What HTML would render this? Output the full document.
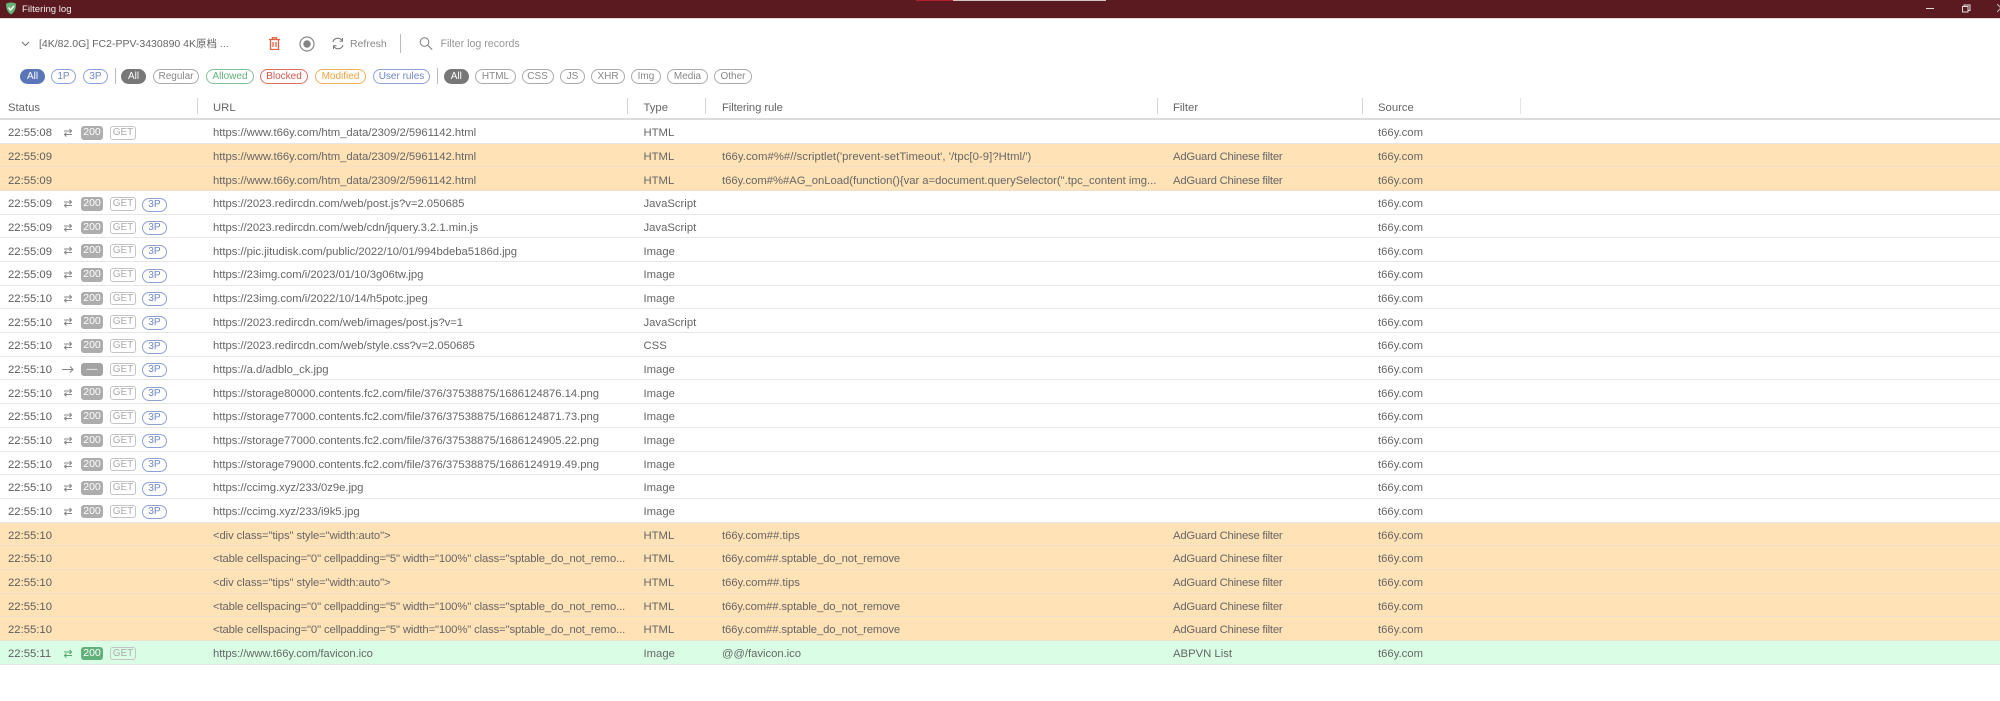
<!DOCTYPE html>
<html lang="en"><head><meta charset="utf-8"><title>Filtering log</title>
<style>
html,body{margin:0;padding:0;background:#fff}
#p{position:relative;width:2000px;height:701px;overflow:hidden;background:#fff;font:11.3px "Liberation Sans","Noto Sans CJK SC",sans-serif;color:#666;filter:blur(.35px)}
#p div,#p span,#p svg{position:absolute}
#bar{left:0;top:0;width:2000px;height:18px;background:#5b1a20;border-bottom:1px solid #e4dcdc;box-sizing:content-box}
.t{white-space:nowrap;line-height:14px}
.h{top:100.6px;color:#666}
.v{top:98px;width:1px;height:16px;background:#d4d4d4}
.pl{top:68.5px;height:15.5px;line-height:14.5px;box-sizing:border-box;border:1px solid #aaa;border-radius:8px;text-align:center;font-size:10px;color:#888;background:#fff}
.bl{border-color:#8ea1d3;color:#7087c6}
.f1{background:#5b76b8;border-color:#5b76b8;color:#fff}
.f2{background:#777;border-color:#777;color:#fff}
.r{left:0;width:2000px;height:23.68px;box-sizing:border-box;border-bottom:1px solid #e6e6e6;background:#fff}
.o{background:#ffe2b6;border-bottom-color:#eee0c8}
.g{background:#dafee5}
.r span{top:6.2px;white-space:nowrap;line-height:14px}
.ti{left:8px;color:#5c5c5c}
.u{left:213px;letter-spacing:-.03px}.y{left:643.5px}.ru{left:722px;letter-spacing:-.03px}.fi{left:1173px;letter-spacing:-.22px}.so{left:1378px}
.r span.tb{letter-spacing:-.14px}
.r span.dv{letter-spacing:-.1px}
.r span.c{left:81px;top:6px;width:22px;height:13.5px;line-height:13.5px;border-radius:3px;background:#adadad;color:#fff;text-align:center;font-size:10.5px}
.g span.c{background:#62b07a}
.r span.m{left:110px;top:6px;width:26px;height:13.5px;line-height:11.5px;border:1px solid #c4c4c4;border-radius:3px;box-sizing:border-box;color:#ababab;text-align:center;font-size:10px}
.r span.p{left:142px;top:6.5px;width:25px;height:14px;line-height:12px;border:1px solid #8ea1d3;border-radius:7px;box-sizing:border-box;color:#6f87c7;text-align:center;font-size:10.2px;background:#fff}
.r svg{left:63px;top:8px;width:10px;height:9px}
</style></head><body><div id="p">
<svg width="0" height="0" style="left:0;top:0"><defs><g id="a" fill="none" stroke-width="1.1"><path d="M1 3h7.5M6.5 1l2 2-2 2M9 6.5H1.500M3.500 4.500l-2 2 2 2"/></g></defs></svg>

<div id="bar"></div>
<div style="left:916px;top:0;width:37px;height:1px;background:#b5202c"></div>
<div style="left:953px;top:0;width:153px;height:1px;background:#cfc6c6"></div>
<svg style="left:5px;top:2px" width="12" height="13" viewBox="0 0 12 13"><path d="M6 .5C4 .5 2 1 1 1.800 1 7 2.500 10.500 6 12.500 9.500 10.500 11 7 11 1.800 10 1 8 .5 6 .5z" fill="#67b279"/><path d="M3.500 5.500l2 2.500 3.500-4" fill="none" stroke="#fff" stroke-width="1.400"/></svg>
<div class="t" style="left:22px;top:2.500px;font-size:9.6px;color:#eee">Filtering log</div>
<div style="left:1926px;top:8px;width:8px;height:1px;background:#ddd"></div>
<svg style="left:1961px;top:4px" width="10" height="9" viewBox="0 0 10 9"><path d="M1.500 2.500h5.500v5.500H1.500zM3 2.500V1h6v5.500H7" fill="none" stroke="#ddd"/></svg>
<svg style="left:1997px;top:4px" width="3" height="9" viewBox="0 0 3 9"><path d="M0 0l8 8M8 0L0 8" stroke="#bbb" fill="none"/></svg>

<svg style="left:21px;top:41px" width="9" height="6" viewBox="0 0 9 6"><path d="M1 1l3.500 3.500L8 1" fill="none" stroke="#777" stroke-width="1.100"/></svg>
<div class="t" style="left:39px;top:37px;font-size:10.5px">[4K/82.0G] FC2-PPV-3430890 4K原档 ...</div>
<svg style="left:269px;top:37px" width="11" height="13" viewBox="0 0 11 13"><path d="M0 2.500h11M3.500 2.500V.8h4v1.700M1.500 2.500v10h8v-10M4 5v5M7 5v5" fill="none" stroke="#e2603f" stroke-width="1.300"/></svg>
<svg style="left:299px;top:36px" width="16" height="16" viewBox="0 0 16 16"><circle cx="8" cy="8" r="7" fill="none" stroke="#8a8a8a" stroke-width="1.200"/><circle cx="8" cy="8" r="3.700" fill="#848484"/></svg>
<svg style="left:331px;top:37px" width="14" height="13" viewBox="0 0 14 13"><path d="M2 5A5 5 0 0 1 11 3.500M12 8A5 5 0 0 1 3 9.500" fill="none" stroke="#777" stroke-width="1.100"/><path d="M11.500 1v3.300H8.500M2.500 12V8.700h3" fill="none" stroke="#777" stroke-width="1"/></svg>
<div class="t" style="left:350px;top:37px;font-size:10.5px;color:#888">Refresh</div>
<div style="left:400px;top:34px;width:1px;height:19px;background:#bbb"></div>
<svg style="left:419px;top:37px" width="14" height="13" viewBox="0 0 14 13"><circle cx="5.500" cy="5" r="4.300" fill="none" stroke="#888" stroke-width="1.100"/><path d="M8.700 8.200l4.500 4.500" stroke="#888" stroke-width="1.100"/></svg>
<div class="t" style="left:440.500px;top:37px;font-size:10.650px;color:#999">Filter log records</div>

<div class="pl f1" style="left:20px;width:25px">All</div>
<div class="pl bl" style="left:51px;width:25px">1P</div>
<div class="pl bl" style="left:83px;width:25px">3P</div>
<div style="left:115px;top:68px;width:1px;height:16px;background:#bbb"></div>
<div class="pl f2" style="left:121px;width:25px">All</div>
<div class="pl" style="left:153px;width:46px">Regular</div>
<div class="pl" style="left:206px;width:48px;border-color:#82c497;color:#63b27c">Allowed</div>
<div class="pl" style="left:260px;width:48px;border-color:#dc6f60;color:#cf574a">Blocked</div>
<div class="pl" style="left:315px;width:51px;border-color:#f2ae58;color:#eea23f">Modified</div>
<div class="pl bl" style="left:373px;width:57px">User rules</div>
<div style="left:437px;top:68px;width:1px;height:16px;background:#bbb"></div>
<div class="pl f2" style="left:443.500px;width:25.500px">All</div>
<div class="pl" style="left:475px;width:41px">HTML</div>
<div class="pl" style="left:521.500px;width:32px">CSS</div>
<div class="pl" style="left:560px;width:25px">JS</div>
<div class="pl" style="left:591px;width:34px">XHR</div>
<div class="pl" style="left:631px;width:30px">Img</div>
<div class="pl" style="left:667px;width:41px">Media</div>
<div class="pl" style="left:714px;width:38px">Other</div>

<div class="t h" style="left:8px">Status</div><div class="v" style="left:197px"></div>
<div class="t h" style="left:213px">URL</div><div class="v" style="left:627px"></div>
<div class="t h" style="left:643.500px">Type</div><div class="v" style="left:705px"></div>
<div class="t h" style="left:722px;letter-spacing:-.1px">Filtering rule</div><div class="v" style="left:1157px"></div>
<div class="t h" style="left:1173px">Filter</div><div class="v" style="left:1362px"></div>
<div class="t h" style="left:1378px">Source</div><div class="v" style="left:1520px;background:#e4e4e4"></div>
<div style="left:0;top:118px;width:2000px;height:2px;background:#dcdcdc"></div>

<div class="r" style="top:120px"><span class="ti">22:55:08</span><svg stroke="#888"><use href="#a"/></svg><span class="c">200</span><span class="m">GET</span><span class="u">https://www.t66y.com/htm_data/2309/2/5961142.html</span><span class="y">HTML</span><span class="so">t66y.com</span></div>
<div class="r o" style="top:143.680px"><span class="ti">22:55:09</span><span class="u">https://www.t66y.com/htm_data/2309/2/5961142.html</span><span class="y">HTML</span><span class="ru" style="letter-spacing:.06px">t66y.com#%#//scriptlet('prevent-setTimeout', '/tpc[0-9]?Html/')</span><span class="fi">AdGuard Chinese filter</span><span class="so">t66y.com</span></div>
<div class="r o" style="top:167.360px"><span class="ti">22:55:09</span><span class="u">https://www.t66y.com/htm_data/2309/2/5961142.html</span><span class="y">HTML</span><span class="ru">t66y.com#%#AG_onLoad(function(){var a=document.querySelector(".tpc_content img...</span><span class="fi">AdGuard Chinese filter</span><span class="so">t66y.com</span></div>
<div class="r" style="top:191.040px"><span class="ti">22:55:09</span><svg stroke="#888"><use href="#a"/></svg><span class="c">200</span><span class="m">GET</span><span class="p">3P</span><span class="u">https://2023.redircdn.com/web/post.js?v=2.050685</span><span class="y">JavaScript</span><span class="so">t66y.com</span></div>
<div class="r" style="top:214.720px"><span class="ti">22:55:09</span><svg stroke="#888"><use href="#a"/></svg><span class="c">200</span><span class="m">GET</span><span class="p">3P</span><span class="u">https://2023.redircdn.com/web/cdn/jquery.3.2.1.min.js</span><span class="y">JavaScript</span><span class="so">t66y.com</span></div>
<div class="r" style="top:238.400px"><span class="ti">22:55:09</span><svg stroke="#888"><use href="#a"/></svg><span class="c">200</span><span class="m">GET</span><span class="p">3P</span><span class="u">https://pic.jitudisk.com/public/2022/10/01/994bdeba5186d.jpg</span><span class="y">Image</span><span class="so">t66y.com</span></div>
<div class="r" style="top:262.080px"><span class="ti">22:55:09</span><svg stroke="#888"><use href="#a"/></svg><span class="c">200</span><span class="m">GET</span><span class="p">3P</span><span class="u">https://23img.com/i/2023/01/10/3g06tw.jpg</span><span class="y">Image</span><span class="so">t66y.com</span></div>
<div class="r" style="top:285.760px"><span class="ti">22:55:10</span><svg stroke="#888"><use href="#a"/></svg><span class="c">200</span><span class="m">GET</span><span class="p">3P</span><span class="u">https://23img.com/i/2022/10/14/h5potc.jpeg</span><span class="y">Image</span><span class="so">t66y.com</span></div>
<div class="r" style="top:309.440px"><span class="ti">22:55:10</span><svg stroke="#888"><use href="#a"/></svg><span class="c">200</span><span class="m">GET</span><span class="p">3P</span><span class="u">https://2023.redircdn.com/web/images/post.js?v=1</span><span class="y">JavaScript</span><span class="so">t66y.com</span></div>
<div class="r" style="top:333.120px"><span class="ti">22:55:10</span><svg stroke="#888"><use href="#a"/></svg><span class="c">200</span><span class="m">GET</span><span class="p">3P</span><span class="u">https://2023.redircdn.com/web/style.css?v=2.050685</span><span class="y">CSS</span><span class="so">t66y.com</span></div>
<div class="r" style="top:356.800px"><span class="ti">22:55:10</span><svg viewBox="0 0 12 9" style="left:62px;width:12px" fill="none" stroke="#888" stroke-width="1.100"><path d="M0 4.500h11M8 1.500l3 3-3 3"/></svg><span class="c" style="background:#a3a3a3">—</span><span class="m">GET</span><span class="p">3P</span><span class="u">https://a.d/adblo_ck.jpg</span><span class="y">Image</span><span class="so">t66y.com</span></div>
<div class="r" style="top:380.480px"><span class="ti">22:55:10</span><svg stroke="#888"><use href="#a"/></svg><span class="c">200</span><span class="m">GET</span><span class="p">3P</span><span class="u">https://storage80000.contents.fc2.com/file/376/37538875/1686124876.14.png</span><span class="y">Image</span><span class="so">t66y.com</span></div>
<div class="r" style="top:404.160px"><span class="ti">22:55:10</span><svg stroke="#888"><use href="#a"/></svg><span class="c">200</span><span class="m">GET</span><span class="p">3P</span><span class="u">https://storage77000.contents.fc2.com/file/376/37538875/1686124871.73.png</span><span class="y">Image</span><span class="so">t66y.com</span></div>
<div class="r" style="top:427.840px"><span class="ti">22:55:10</span><svg stroke="#888"><use href="#a"/></svg><span class="c">200</span><span class="m">GET</span><span class="p">3P</span><span class="u">https://storage77000.contents.fc2.com/file/376/37538875/1686124905.22.png</span><span class="y">Image</span><span class="so">t66y.com</span></div>
<div class="r" style="top:451.520px"><span class="ti">22:55:10</span><svg stroke="#888"><use href="#a"/></svg><span class="c">200</span><span class="m">GET</span><span class="p">3P</span><span class="u">https://storage79000.contents.fc2.com/file/376/37538875/1686124919.49.png</span><span class="y">Image</span><span class="so">t66y.com</span></div>
<div class="r" style="top:475.200px"><span class="ti">22:55:10</span><svg stroke="#888"><use href="#a"/></svg><span class="c">200</span><span class="m">GET</span><span class="p">3P</span><span class="u">https://ccimg.xyz/233/0z9e.jpg</span><span class="y">Image</span><span class="so">t66y.com</span></div>
<div class="r" style="top:498.880px"><span class="ti">22:55:10</span><svg stroke="#888"><use href="#a"/></svg><span class="c">200</span><span class="m">GET</span><span class="p">3P</span><span class="u">https://ccimg.xyz/233/i9k5.jpg</span><span class="y">Image</span><span class="so">t66y.com</span></div>
<div class="r o" style="top:522.560px"><span class="ti">22:55:10</span><span class="u dv">&lt;div class="tips" style="width:auto"&gt;</span><span class="y">HTML</span><span class="ru">t66y.com##.tips</span><span class="fi">AdGuard Chinese filter</span><span class="so">t66y.com</span></div>
<div class="r o" style="top:546.240px"><span class="ti">22:55:10</span><span class="u tb">&lt;table cellspacing="0" cellpadding="5" width="100%" class="sptable_do_not_remo...</span><span class="y">HTML</span><span class="ru" style="letter-spacing:-.12px">t66y.com##.sptable_do_not_remove</span><span class="fi">AdGuard Chinese filter</span><span class="so">t66y.com</span></div>
<div class="r o" style="top:569.920px"><span class="ti">22:55:10</span><span class="u dv">&lt;div class="tips" style="width:auto"&gt;</span><span class="y">HTML</span><span class="ru">t66y.com##.tips</span><span class="fi">AdGuard Chinese filter</span><span class="so">t66y.com</span></div>
<div class="r o" style="top:593.600px"><span class="ti">22:55:10</span><span class="u tb">&lt;table cellspacing="0" cellpadding="5" width="100%" class="sptable_do_not_remo...</span><span class="y">HTML</span><span class="ru" style="letter-spacing:-.12px">t66y.com##.sptable_do_not_remove</span><span class="fi">AdGuard Chinese filter</span><span class="so">t66y.com</span></div>
<div class="r o" style="top:617.280px"><span class="ti">22:55:10</span><span class="u tb">&lt;table cellspacing="0" cellpadding="5" width="100%" class="sptable_do_not_remo...</span><span class="y">HTML</span><span class="ru" style="letter-spacing:-.12px">t66y.com##.sptable_do_not_remove</span><span class="fi">AdGuard Chinese filter</span><span class="so">t66y.com</span></div>
<div class="r g" style="top:640.960px"><span class="ti">22:55:11</span><svg stroke="#5aa86f"><use href="#a"/></svg><span class="c">200</span><span class="m">GET</span><span class="u" style="letter-spacing:-.08px">https://www.t66y.com/favicon.ico</span><span class="y">Image</span><span class="ru">@@/favicon.ico</span><span class="fi" style="letter-spacing:0">ABPVN List</span><span class="so">t66y.com</span></div>
</div></body></html>
